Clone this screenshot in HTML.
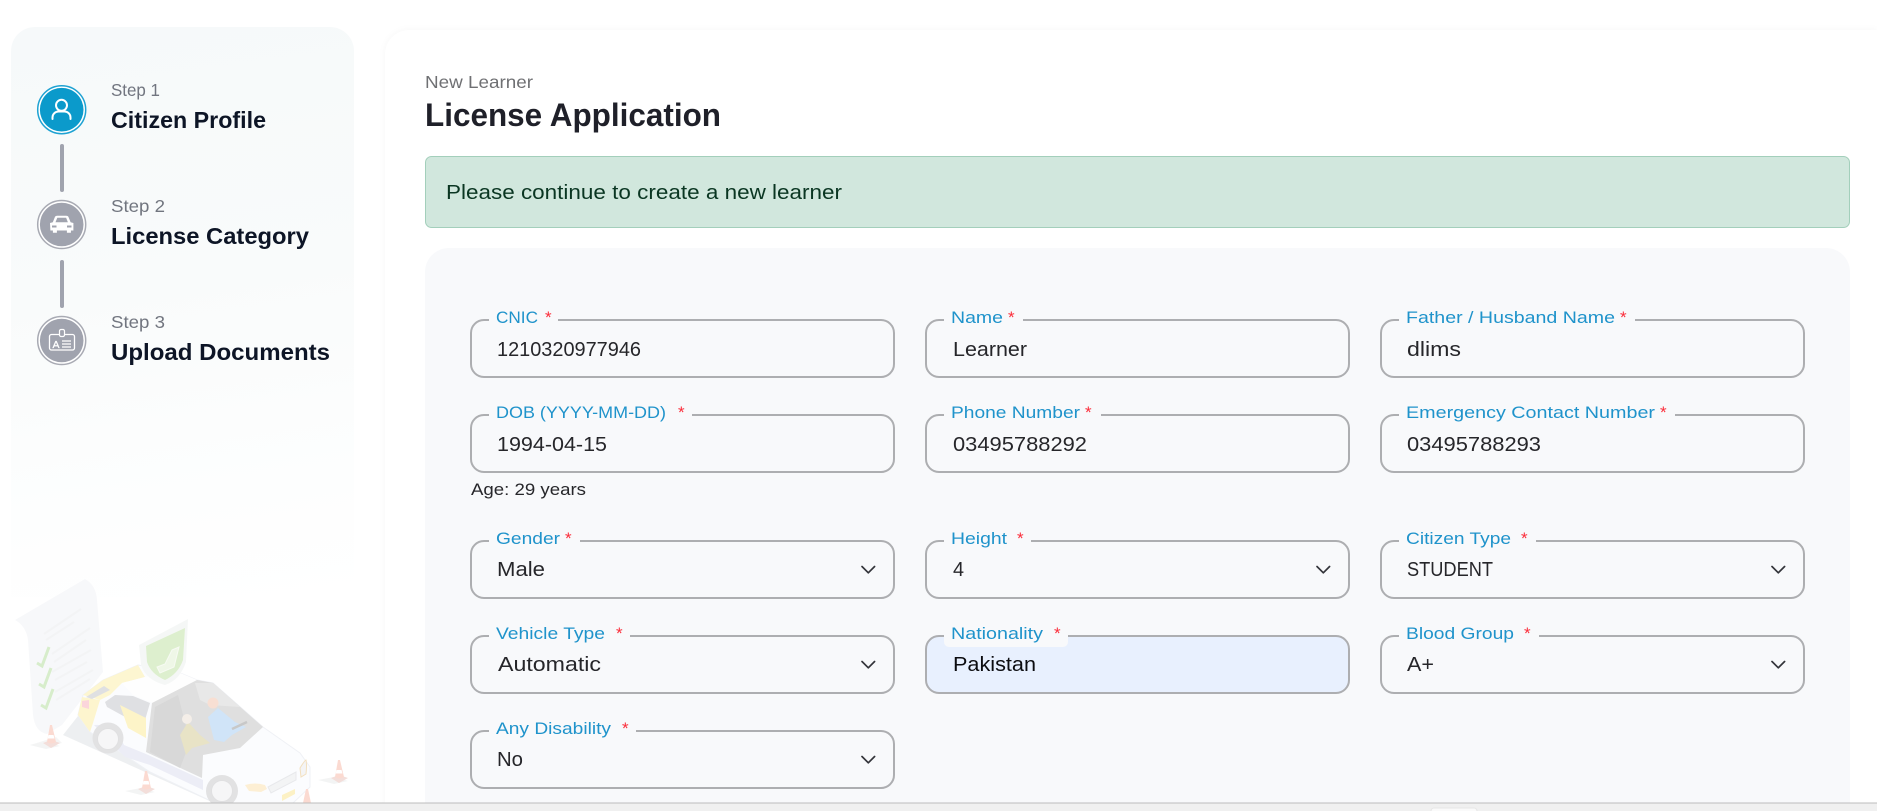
<!DOCTYPE html>
<html lang="en">
<head>
<meta charset="utf-8">
<title>License Application</title>
<style>
html,body{margin:0;padding:0;width:1877px;height:811px;overflow:hidden;background:#fff}
#page{position:relative;width:1877px;height:811px;overflow:hidden;background:#fff}
#side{position:absolute;left:11px;top:27px;width:343px;height:570px;border-radius:24px 24px 0 0;background:linear-gradient(172deg,#f6f9fa 0%,#f9fbfb 45%,#fdfefe 80%,#fff 100%)}
#card{position:absolute;left:385px;top:30px;width:1492px;height:781px;border-radius:24px 0 0 0;background:#fff;box-shadow:0 0 8px rgba(0,0,0,.04)}
svg{position:absolute;left:0;top:0;display:block}
text{font-family:"Liberation Sans",sans-serif;white-space:pre}
.l{font-size:17px;fill:#1f93cb}
.s{font-size:17px;fill:#fb2d3a}
.v{font-size:20px;fill:#26262a}
.st{font-size:17.5px;fill:#71757f}
.h{font-size:23px;font-weight:700;fill:#0d1526}
.box{fill:#f8f9fb;stroke:#adaeb1;stroke-width:2}
.gap{fill:#f8f9fb}
.ch{fill:none;stroke:#33343a;stroke-width:1.7;stroke-linecap:round;stroke-linejoin:round}
</style>
</head>
<body>
<div id="page">
<div id="side"></div>
<div id="card"></div>
<svg width="1877" height="811" viewBox="0 0 1877 811" xmlns="http://www.w3.org/2000/svg">

<!-- stepper -->
<circle cx="61.7" cy="109.7" r="24" fill="#fff" stroke="#1ea2d2" stroke-width="1.5"/>
<circle cx="61.7" cy="109.7" r="21.8" fill="#0b9acb"/>
<circle cx="61.500" cy="105.300" r="5.500" fill="none" stroke="#fff" stroke-width="2"/>
<path d="M52.500 119v-1.500c0-3.500 2.800-6 6-6h6c3.200 0 6 2.500 6 6v1.500" fill="none" stroke="#fff" stroke-width="2" stroke-linecap="round"/>
<rect x="60" y="144" width="4" height="48" rx="2" fill="#a0a3ae"/>
<circle cx="61.700" cy="224.500" r="24" fill="#fff" stroke="#a8aab3" stroke-width="1.500"/>
<circle cx="61.700" cy="224.500" r="21.800" fill="#a0a3ae"/>
<path d="M50 223l2.800-.8 2-5c.5-1 1-1.400 2.500-1.400h8.800c1.500 0 2 .4 2.500 1.400l2 5 2.800.8v7.500h-2.500v2.300h-4v-2.300h-10v2.300h-4v-2.300h-2.500z" fill="#fff"/>
<path d="M55.500 222.300l1.800-4.600h8.800l1.800 4.600z" fill="#a0a3ae"/>
<rect x="52" y="225.500" width="4.500" height="2" fill="#a0a3ae"/><rect x="67" y="225.500" width="4.500" height="2" fill="#a0a3ae"/>
<rect x="60" y="260" width="4" height="48" rx="2" fill="#a0a3ae"/>
<circle cx="61.700" cy="340.500" r="24" fill="#fff" stroke="#a8aab3" stroke-width="1.500"/>
<circle cx="61.700" cy="340.500" r="21.800" fill="#a0a3ae"/>
<rect x="49.500" y="334.500" width="25" height="15.500" rx="2" fill="none" stroke="#fff" stroke-width="1.300"/>
<rect x="59.500" y="329.500" width="5" height="7" rx="1.500" fill="#a0a3ae" stroke="#fff" stroke-width="1.200"/>
<text x="52.500" y="348" style="font-size:10.500px" fill="#fff" stroke="#fff" stroke-width=".3">A</text>
<path d="M62 341h9M62 344h9M62 347h9" stroke="#fff" stroke-width="1.200"/>

<text class="st" x="111" y="96" textLength="49" lengthAdjust="spacingAndGlyphs">Step 1</text>
<text class="h" x="111" y="128" textLength="155" lengthAdjust="spacingAndGlyphs">Citizen Profile</text>
<text class="st" x="111" y="212" textLength="54" lengthAdjust="spacingAndGlyphs">Step 2</text>
<text class="h" x="111" y="244" textLength="198" lengthAdjust="spacingAndGlyphs">License Category</text>
<text class="st" x="111" y="328" textLength="54" lengthAdjust="spacingAndGlyphs">Step 3</text>
<text class="h" x="111" y="360" textLength="219" lengthAdjust="spacingAndGlyphs">Upload Documents</text>

<!-- illustration -->
<g opacity=".82">
<path d="M15 620L85 579Q96 585 97 600L103 672L62 725L47 734Q35 732 33 715L28 640Q26 626 15 620Z" fill="#f6f7f9"/>
<path d="M44 634L81 609M46 640L74 622M52 654L90 628M54 662L86 640M52 672L91 650M55 680L87 662M55 692L93 670M56 700L90 679" stroke="#f1f2f4" stroke-width="2" fill="none"/>
<path d="M37 663l5 3 7-19M39 684l5 3 7-19M41 705l5 3 7-19" stroke="#cfeac0" stroke-width="3" fill="none"/>
<path d="M63 735L78 716L250 803L214 803Z" fill="#eaecee"/>
<path d="M30 745l26-8 6 6-20 5z" fill="#f3f4f4"/>
<!-- body -->
<path d="M78 715L83 695L103 680L138 665L173 670L197 680L213 683L263 727L300 753L310 767L310 787L293 803L215 803L150 772L90 732Z" fill="#fbfcfe" stroke="#eceef4"/>
<path d="M78 715L82 697L100 700L93 723L90 732Z" fill="#fdf4c4"/>
<path d="M83 695L103 680L138 665L145 677L122 683L110 695L100 700Z" fill="#fdf5c8"/>
<path d="M122 683L145 677L173 670L197 680L153 703L133 695Z" fill="#fefefe"/>
<path d="M86 697L104 686L110 690L92 699Z" fill="#d9dadc"/>
<path d="M105 702L115 695L133 696L150 703L143 727L127 718L107 707Z" fill="#d9dadd"/>
<path d="M82 701l7-1v9l-7-2z" fill="#fbcdd4"/>
<!-- opening -->
<path d="M146 752L152 703L197 680L213 683L263 727L240 748L203 755L202 778Z" fill="#d8d8d8"/>
<path d="M150 752L155 707L178 695L190 742L180 768Z" fill="#d0d0d0"/>
<path d="M195 683L213 683L240 707L210 705L200 700Z" fill="#e4e4e3"/>
<path d="M208 717L218 708L235 722L246 727L232 735L224 742L214 740Z" fill="#c6dff7"/>
<circle cx="213" cy="703" r="5.500" fill="#f7d9ca"/>
<path d="M180 735L188 722L200 735L210 743L192 748L186 755Z" fill="#e4ddba"/>
<circle cx="187" cy="719" r="5" fill="#f2ebe3"/>
<path d="M232 729l15-7" stroke="#bcbcbc" stroke-width="2.500"/>
<!-- side -->
<path d="M120 705L146 718L146 738L128 728Z" fill="#fdf2bd"/>
<path d="M94 725Q115 723 124 745L146 754L203 780L203 790L150 765L125 757Z" fill="#e8eaf5"/>
<circle cx="108" cy="738" r="15.500" fill="#dcdcde"/><circle cx="108" cy="739" r="10.500" fill="#f5f5f6" stroke="#dadadb"/>
<circle cx="222" cy="791" r="16" fill="#dcdcde"/><circle cx="222" cy="791" r="10.500" fill="#f5f5f6" stroke="#dadadb"/>
<path d="M245 785q10-3 20 0l2 4-6 3-12-1z" fill="#fdeccb"/>
<path d="M268 787l28-15v8l-25 13z" fill="#f1f2f4" stroke="#e4e5e8"/>
<path d="M282 795l13-6v5l-13 7z" fill="#fcefb9"/>
<path d="M300 768q5-8 6-8 1 5 0 14l-5 3z" fill="#f2f2f3" stroke="#f0d9b0"/>
<path d="M139 645L188 619L186 662Q180 680 165 685Q146 680 141 665Z" fill="#f4f6f5"/>
<path d="M146 646L185 628L183 660Q178 674 165 680Q151 674 147 662Z" fill="#d6ecc4"/>
<path d="M172 650l7-3-5 20-14 6-3-6 8-3z" fill="#ecf6e2" stroke="#f6faf1"/>
<g><path d="M30 745l16-3 14 4-14 3z" fill="#f1f2f2"/><path d="M43 743l8-3 9 3-9 5z" fill="#f1d7d2"/><path d="M47 742l3-17h2l4 17q-5 3-9 0z" fill="#fbd3c8"/><path d="M48.500 735h5l1 3.500h-7z" fill="#fff"/></g>
<g transform="translate(95,46)"><path d="M30 745l16-3 14 4-14 3z" fill="#f1f2f2"/><path d="M43 743l8-3 9 3-9 5z" fill="#f1d7d2"/><path d="M47 742l3-17h2l4 17q-5 3-9 0z" fill="#fbd3c8"/><path d="M48.500 735h5l1 3.500h-7z" fill="#fff"/></g>
<g transform="translate(288,35)"><path d="M30 745l16-3 14 4-14 3z" fill="#f1f2f2"/><path d="M43 743l8-3 9 3-9 5z" fill="#f1d7d2"/><path d="M47 742l3-17h2l4 17q-5 3-9 0z" fill="#fbd3c8"/><path d="M48.500 735h5l1 3.500h-7z" fill="#fff"/></g>
<path d="M303 803l3-14h2l3 14z" fill="#fbd3c8"/>
</g>

<!-- heading -->
<text x="425" y="88" style="font-size:17.500px" fill="#6f7073" textLength="108" lengthAdjust="spacingAndGlyphs">New Learner</text>
<text x="425" y="126" style="font-size:32px;font-weight:700" fill="#1f2029" textLength="296" lengthAdjust="spacingAndGlyphs">License Application</text>

<!-- alert -->
<rect x="425.500" y="156.500" width="1424" height="71" rx="6" fill="#d1e7dd" stroke="#a3cfbb"/>
<text x="446" y="199" style="font-size:20px" fill="#0a3622" textLength="396" lengthAdjust="spacingAndGlyphs">Please continue to create a new learner</text>

<!-- panel -->
<rect x="425" y="248" width="1425" height="600" rx="24" fill="#f8f9fb"/>

<!-- row 1 -->
<rect class="box" x="471" y="320" width="423" height="57" rx="13"/>
<rect class="gap" x="489" y="315" width="69" height="10"/>
<text class="l" x="496" y="323" textLength="42" lengthAdjust="spacingAndGlyphs">CNIC</text>
<text class="s" x="545" y="323">*</text>
<text class="v" x="497" y="356" textLength="144" lengthAdjust="spacingAndGlyphs">1210320977946</text>

<rect class="box" x="926" y="320" width="423" height="57" rx="13"/>
<rect class="gap" x="944" y="315" width="79" height="10"/>
<text class="l" x="951" y="323" textLength="52" lengthAdjust="spacingAndGlyphs">Name</text>
<text class="s" x="1008" y="323">*</text>
<text class="v" x="953" y="356" textLength="74" lengthAdjust="spacingAndGlyphs">Learner</text>

<rect class="box" x="1381" y="320" width="423" height="57" rx="13"/>
<rect class="gap" x="1399" y="315" width="236" height="10"/>
<text class="l" x="1406" y="323" textLength="209" lengthAdjust="spacingAndGlyphs">Father / Husband Name</text>
<text class="s" x="1620" y="323">*</text>
<text class="v" x="1407" y="356" textLength="54" lengthAdjust="spacingAndGlyphs">dlims</text>

<!-- row 2 -->
<rect class="box" x="471" y="415" width="423" height="57" rx="13"/>
<rect class="gap" x="489" y="410" width="203" height="10"/>
<text class="l" x="496" y="418" textLength="170" lengthAdjust="spacingAndGlyphs">DOB (YYYY-MM-DD)</text>
<text class="s" x="678" y="418">*</text>
<text class="v" x="497" y="451" textLength="110" lengthAdjust="spacingAndGlyphs">1994-04-15</text>
<text x="471" y="495" style="font-size:17px" fill="#27272b" textLength="115" lengthAdjust="spacingAndGlyphs">Age: 29 years</text>

<rect class="box" x="926" y="415" width="423" height="57" rx="13"/>
<rect class="gap" x="944" y="410" width="157" height="10"/>
<text class="l" x="951" y="418" textLength="129" lengthAdjust="spacingAndGlyphs">Phone Number</text>
<text class="s" x="1085" y="418">*</text>
<text class="v" x="953" y="451" textLength="134" lengthAdjust="spacingAndGlyphs">03495788292</text>

<rect class="box" x="1381" y="415" width="423" height="57" rx="13"/>
<rect class="gap" x="1399" y="410" width="276" height="10"/>
<text class="l" x="1406" y="418" textLength="249" lengthAdjust="spacingAndGlyphs">Emergency Contact Number</text>
<text class="s" x="1660" y="418">*</text>
<text class="v" x="1407" y="451" textLength="134" lengthAdjust="spacingAndGlyphs">03495788293</text>

<!-- row 3 -->
<rect class="box" x="471" y="541" width="423" height="57" rx="13"/>
<rect class="gap" x="489" y="536" width="91" height="10"/>
<text class="l" x="496" y="544" textLength="64" lengthAdjust="spacingAndGlyphs">Gender</text>
<text class="s" x="565" y="544">*</text>
<text class="v" x="497" y="576" textLength="48" lengthAdjust="spacingAndGlyphs">Male</text>
<path class="ch" d="M862 566.500l6.300 6.300 6.300-6.300"/>

<rect class="box" x="926" y="541" width="423" height="57" rx="13"/>
<rect class="gap" x="944" y="536" width="87" height="10"/>
<text class="l" x="951" y="544" textLength="56" lengthAdjust="spacingAndGlyphs">Height</text>
<text class="s" x="1017" y="544">*</text>
<text class="v" x="953" y="576" textLength="11" lengthAdjust="spacingAndGlyphs">4</text>
<path class="ch" d="M1317 566.500l6.300 6.300 6.300-6.300"/>

<rect class="box" x="1381" y="541" width="423" height="57" rx="13"/>
<rect class="gap" x="1399" y="536" width="137" height="10"/>
<text class="l" x="1406" y="544" textLength="105" lengthAdjust="spacingAndGlyphs">Citizen Type</text>
<text class="s" x="1521" y="544">*</text>
<text class="v" x="1407" y="576" textLength="86" lengthAdjust="spacingAndGlyphs">STUDENT</text>
<path class="ch" d="M1772 566.500l6.300 6.300 6.300-6.300"/>

<!-- row 4 -->
<rect class="box" x="471" y="636" width="423" height="57" rx="13"/>
<rect class="gap" x="489" y="631" width="141" height="10"/>
<text class="l" x="496" y="639" textLength="109" lengthAdjust="spacingAndGlyphs">Vehicle Type</text>
<text class="s" x="616" y="639">*</text>
<text class="v" x="498" y="671" textLength="103" lengthAdjust="spacingAndGlyphs">Automatic</text>
<path class="ch" d="M862 661.500l6.300 6.300 6.300-6.300"/>

<rect x="926" y="636" width="423" height="57" rx="13" fill="#e8f0fe" stroke="#adaeb1" stroke-width="2"/>
<rect x="944" y="630" width="124" height="17" rx="5" fill="#f8f9fb"/>
<text class="l" x="951" y="639" textLength="92" lengthAdjust="spacingAndGlyphs">Nationality</text>
<text class="s" x="1054" y="639">*</text>
<text class="v" x="953" y="671" style="fill:#0c0c10" textLength="83" lengthAdjust="spacingAndGlyphs">Pakistan</text>

<rect class="box" x="1381" y="636" width="423" height="57" rx="13"/>
<rect class="gap" x="1399" y="631" width="140" height="10"/>
<text class="l" x="1406" y="639" textLength="108" lengthAdjust="spacingAndGlyphs">Blood Group</text>
<text class="s" x="1524" y="639">*</text>
<text class="v" x="1407" y="671" textLength="27" lengthAdjust="spacingAndGlyphs">A+</text>
<path class="ch" d="M1772 661.500l6.300 6.300 6.300-6.300"/>

<!-- row 5 -->
<rect class="box" x="471" y="731" width="423" height="57" rx="13"/>
<rect class="gap" x="489" y="726" width="147" height="10"/>
<text class="l" x="496" y="734" textLength="115" lengthAdjust="spacingAndGlyphs">Any Disability</text>
<text class="s" x="622" y="734">*</text>
<text class="v" x="497" y="766" textLength="26" lengthAdjust="spacingAndGlyphs">No</text>
<path class="ch" d="M862 756.500l6.300 6.300 6.300-6.300"/>

<!-- bottom bar -->
<rect x="0" y="803" width="1877" height="8" fill="#f0f0f0"/>
<rect x="0" y="802.500" width="1877" height="1" fill="#bcbcbc"/>
<rect x="1431" y="808" width="46" height="6" rx="3" fill="#fafafa" stroke="#e6e6e6"/>
</svg>
</div>
</body>
</html>
